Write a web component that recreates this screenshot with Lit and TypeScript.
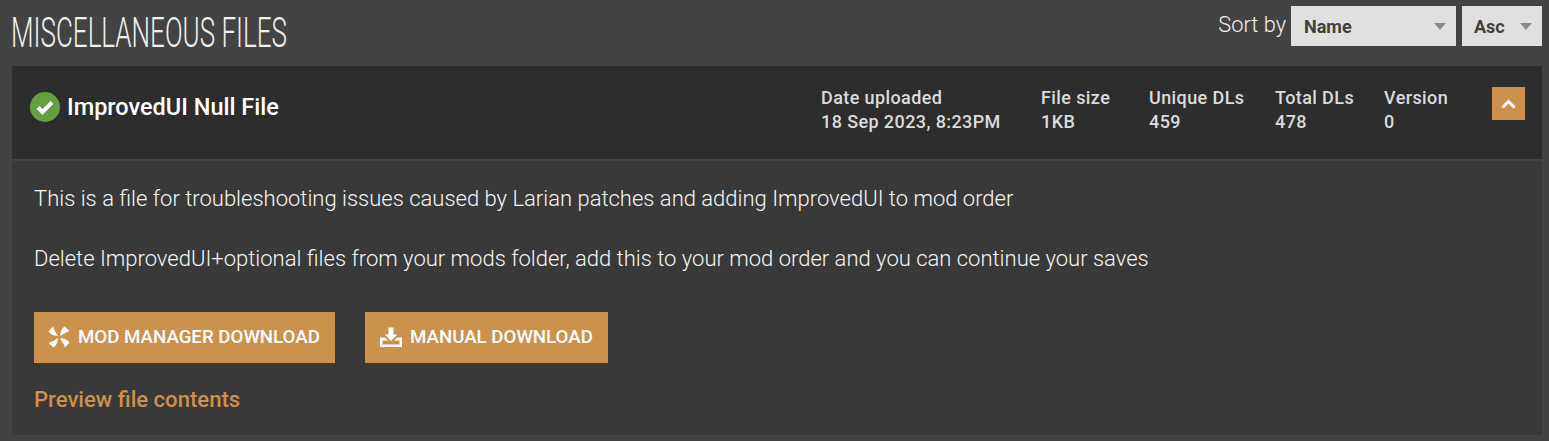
import { LitElement, html, css } from "lit";
import { customElement } from "lit/decorators.js";

const stats = [
  ["Date uploaded", "18 Sep 2023, 8:23PM", 220],
  ["File size", "1KB", 108],
  ["Unique DLs", "459", 126],
  ["Total DLs", "478", 109],
  ["Version", "0", 108],
] as const;

const blade = "M0.500 5.500L5 0.500C6 4 8 7 10.300 9.800 6.500 10 2.500 8.500 0.500 5.500Z";

@customElement("app-root")
export class AppRoot extends LitElement {
  static styles = css`
    :host {
      display: block;
      width: 1549px;
      height: 441px;
      overflow: hidden;
      background: #434343;
      font-family: Roboto, "Liberation Sans", sans-serif;
      box-sizing: border-box;
      padding: 0 7px 0 12px;
    }
    .top {
      display: flex;
      justify-content: space-between;
      height: 66px;
    }
    h2 {
      margin: 0 0 0 -1px;
      padding-top: 8px;
      font-size: 42px;
      line-height: 50px;
      font-weight: 300;
      color: #f0f0f0;
      white-space: nowrap;
      transform: scaleX(0.62);
      transform-origin: left center;
    }
    .sort {
      display: flex;
      align-items: flex-start;
      padding-top: 6px;
    }
    .sort-label {
      font-size: 21.8px;
      line-height: 38px;
      font-weight: 300;
      color: #f0f0f0;
      margin-right: 5px;
    }
    .select {
      display: flex;
      align-items: center;
      justify-content: space-between;
      box-sizing: border-box;
      height: 40px;
      background: #e0e0e0;
      color: #404040;
      font-size: 18px;
      font-weight: 700;
      padding: 0 10px 0 13px;
    }
    .select.name { width: 165px; margin-right: 6px; }
    .select.dir { width: 80px; padding-left: 12px; }
    .arrow {
      width: 0;
      height: 0;
      border-left: 6px solid transparent;
      border-right: 6px solid transparent;
      border-top: 7px solid #8a8a8a;
    }
    .head {
      display: flex;
      align-items: flex-start;
      height: 93px;
      box-sizing: border-box;
      background: #2d2d2d;
      padding: 20px 17px 0 18px;
    }
    .check { width: 30px; height: 30px; margin-top: 6px; flex: none; }
    .file-name {
      margin-left: 7px;
      margin-top: 6px;
      font-size: 23.5px;
      line-height: 30px;
      font-weight: 500;
      color: #fff;
      flex: 1;
    }
    .stat {
      font-size: 18px;
      line-height: 24px;
      letter-spacing: 0.4px;
      font-weight: 500;
      color: #dcdcdc;
      white-space: nowrap;
    }
    .stat span { display: block; }
    .toggle {
      width: 33px;
      height: 33px;
      background: #cc914c;
      display: flex;
      align-items: center;
      justify-content: center;
      margin-top: 1px;
    }
    .body {
      margin-top: 2px;
      background: #393939;
      height: 274px;
      box-sizing: border-box;
      padding: 23px 22px 0;
      color: #f5f5f5;
      font-size: 22px;
      line-height: 30px;
      font-weight: 300;
    }
    .body p { margin: 0 0 30px; }
    .body p + p { margin-bottom: 0; }
    .actions {
      display: flex;
      gap: 30px;
      margin-top: 38px;
    }
    .btn {
      display: flex;
      align-items: center;
      box-sizing: border-box;
      gap: 8px;
      height: 51px;
      padding: 0 0 2px 14px;
      background: #cc914c;
      color: #fff;
      font-size: 18.7px;
      font-weight: 500;
      white-space: nowrap;
    }
    .btn.mm { width: 301px; }
    .btn.man { width: 243px; padding-left: 15px; }
    .btn svg { width: 22px; height: 22px; flex: none; }
    .preview {
      display: block;
      margin-top: 21px;
      color: #cc914c;
      font-size: 22.1px;
      line-height: 30px;
      font-weight: 500;
    }
  `;

  render() {
    return html`
      <div class="top">
        <h2>MISCELLANEOUS FILES</h2>
        <div class="sort">
          <span class="sort-label">Sort by</span>
          <div class="select name">Name<i class="arrow"></i></div>
          <div class="select dir">Asc<i class="arrow"></i></div>
        </div>
      </div>
      <div class="head">
        <svg class="check" viewBox="0 0 30 30">
          <circle cx="15" cy="15" r="15" fill="#669f3f"></circle>
          <path d="M8 15.500l4.500 4.500 9.500-9.500" fill="none" stroke="#fff" stroke-width="4"></path>
        </svg>
        <div class="file-name">ImprovedUI Null File</div>
        ${stats.map(
          ([k, v, w]) => html`<div class="stat" style="width:${w}px">
            <span>${k}</span><span>${v}</span>
          </div>`
        )}
        <div class="toggle">
          <svg width="15" height="10" viewBox="0 0 15 10">
            <path d="M1.500 8.500L7.500 2.500l6 6" fill="none" stroke="#fff" stroke-width="3"></path>
          </svg>
        </div>
      </div>
      <div class="body">
        <p>This is a file for troubleshooting issues caused by Larian patches and adding ImprovedUI to mod order</p>
        <p>Delete ImprovedUI+optional files from your mods folder, add this to your mod order and you can continue your saves</p>
        <div class="actions">
          <div class="btn mm">
            <svg viewBox="0 0 22 22" fill="#fff">
              <path d=${blade}></path>
              <path d=${blade} transform="rotate(90 11 11)"></path>
              <path d=${blade} transform="rotate(180 11 11)"></path>
              <path d=${blade} transform="rotate(270 11 11)"></path>
            </svg>
            MOD MANAGER DOWNLOAD
          </div>
          <div class="btn man">
            <svg viewBox="0 0 22 22" fill="#fff">
              <path d="M8.500 1.500h5v7h3.800L11 15 4.700 8.500h3.800Z"></path>
              <path d="M0 11.500h5l3 3H2.500v4h17v-4H14l3-3h5V21H0Z"></path>
            </svg>
            MANUAL DOWNLOAD
          </div>
        </div>
        <a class="preview">Preview file contents</a>
      </div>
    `;
  }
}
